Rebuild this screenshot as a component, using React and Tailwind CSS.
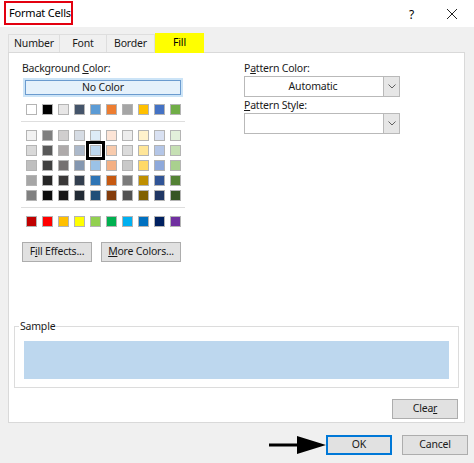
import React from "react";

const theme = [
  ["#FFFFFF", "#000000", "#E7E6E6", "#44546A", "#5B9BD5", "#ED7D31", "#A5A5A5", "#FFC000", "#4472C4", "#70AD47"],
];
const tints = [
  ["#F2F2F2", "#7F7F7F", "#D0CECE", "#D6DCE4", "#DDEBF7", "#FCE4D6", "#EDEDED", "#FFF2CC", "#D9E1F2", "#E2EFDA"],
  ["#D9D9D9", "#595959", "#AEAAAA", "#ACB9CA", "#BDD7EE", "#F8CBAD", "#DBDBDB", "#FFE699", "#B4C6E7", "#C6E0B4"],
  ["#BFBFBF", "#404040", "#757171", "#8497B0", "#9BC2E6", "#F4B084", "#C9C9C9", "#FFD966", "#8EA9DB", "#A9D08E"],
  ["#A6A6A6", "#262626", "#3A3838", "#333F4F", "#2F75B5", "#C65911", "#7B7B7B", "#BF8F00", "#305496", "#548235"],
  ["#808080", "#0D0D0D", "#171616", "#222B35", "#1F4E78", "#833C0C", "#525252", "#806000", "#203764", "#375623"],
];
const standard = ["#C00000", "#FF0000", "#FFC000", "#FFFF00", "#92D050", "#00B050", "#00B0F0", "#0070C0", "#002060", "#7030A0"];

function Swatch({ color, selected }) {
  return (
    <div className="relative w-[11px] h-[11px]">
      <div className="w-full h-full border border-[#b4b4b4]" style={{ backgroundColor: color }} />
      {selected && <div className="absolute -inset-[4px] border-[3px] border-black" />}
    </div>
  );
}

function Row({ colors, sel = -1 }) {
  return (
    <div className="flex gap-x-[5px]">
      {colors.map((c, i) => (
        <Swatch key={i} color={c} selected={i === sel} />
      ))}
    </div>
  );
}

function Btn({ children, w, primary }) {
  return (
    <div
      className={`h-[20px] flex items-center justify-center whitespace-nowrap bg-[#e1e1e1] ${primary ? "border-2 border-[#0078d7]" : "border border-[#adadad]"}`}
      style={{ width: w }}
    >
      {children}
    </div>
  );
}

function Dropdown({ value }) {
  return (
    <div className="w-[156px] h-[21px] border border-[#b9b9b9] bg-white flex">
      <div className="flex-1 flex items-center justify-center pr-[2px]">{value}</div>
      <div className="w-[16px] h-full bg-[#e6e6e6] border-l border-[#b9b9b9] flex items-center justify-center">
        <svg width="8" height="5" viewBox="0 0 8 5">
          <path d="M0.5 0.5 L4 4 L7.5 0.5" fill="none" stroke="#606060" strokeWidth="1" />
        </svg>
      </div>
    </div>
  );
}

export default function App() {
  return (
    <div
      className="w-[474px] h-[463px] bg-[#f0f0f0] overflow-hidden text-[10.5px] tracking-[-0.2px] text-[#1a1a1a] relative"
      style={{ fontFamily: '"Noto Sans", "Liberation Sans", sans-serif' }}
    >
      {/* title bar */}
      <div className="h-[27px] bg-white flex items-start">
        <div className="ml-[4px] mt-[1px] h-[24px] w-[69px] border-2 border-[#e3000f] flex items-center pl-[3px] text-[11px] text-black whitespace-nowrap">
          Format Cells
        </div>
        <div className="flex-1" />
        <div className="mt-[6px] mr-[32px] text-[12px] text-black">?</div>
        <div className="mt-[4px] mr-[16px] text-black">
          <svg width="12" height="20" viewBox="0 0 12 20">
            <path d="M1 5 L11 15 M11 5 L1 15" stroke="#222" strokeWidth="1" />
          </svg>
        </div>
      </div>

      {/* tabs */}
      <div className="h-[25px] pt-[7px] pl-[8px] flex relative z-10">
        <div className="w-[51px] h-[18px] flex items-center justify-center border-t border-l border-[#dedede]">Number</div>
        <div className="w-[47px] h-[18px] flex items-center justify-center border-t border-l border-[#dedede]">Font</div>
        <div className="w-[49px] h-[18px] flex items-center justify-center border-t border-l border-r border-[#dedede]">Border</div>
        <div className="w-[49px] h-[20px] -mt-[1px] bg-[#ffff00] flex items-center justify-center text-black">Fill</div>
      </div>

      {/* panel */}
      <div className="ml-[8px] w-[457px] h-[371px] bg-white border border-[#d9d9d9] flex flex-col">
        <div className="flex pl-[13px] pt-[7px] h-[265px]">
          {/* left */}
          <div className="w-[222px] flex flex-col">
            <div className="h-[16px] leading-[16px]">
              Background <span className="underline">C</span>olor:
            </div>
            <div className="mt-[2px] ml-[1px] w-[160px] h-[19px] bg-[#cce4f7] p-[2px]">
              <div className="w-full h-full bg-[#e5f1fb] border border-[#6b9bcf] flex items-center justify-center">No Color</div>
            </div>
            <div className="mt-[7px] ml-[4px]">
              <Row colors={theme[0]} />
            </div>
            <div className="mt-[6px] w-[164px] h-[1px] bg-[#dedede] -ml-[1px]" />
            <div className="mt-[8px] ml-[4px] flex flex-col gap-y-[4px]">
              {tints.map((r, i) => (
                <Row key={i} colors={r} sel={i === 1 ? 4 : -1} />
              ))}
            </div>
            <div className="mt-[6px] w-[164px] h-[1px] bg-[#dedede] -ml-[1px]" />
            <div className="mt-[8px] ml-[4px]">
              <Row colors={standard} />
            </div>
            <div className="mt-[15px] flex gap-x-[9px]">
              <Btn w={70}>
                F<span className="underline">i</span>ll Effects...
              </Btn>
              <Btn w={80}>
                <span className="underline">M</span>ore Colors...
              </Btn>
            </div>
          </div>
          {/* right */}
          <div className="flex flex-col">
            <div className="h-[16px] leading-[16px]">
              P<span className="underline">a</span>ttern Color:
            </div>
            <div>
              <Dropdown value="Automatic" />
            </div>
            <div className="h-[16px] leading-[16px]">
              <span className="underline">P</span>attern Style:
            </div>
            <div>
              <Dropdown value="" />
            </div>
          </div>
        </div>

        {/* sample */}
        <div className="mx-[5px] mt-[8px] h-[62px] border border-[#dcdcdc] relative">
          <div className="absolute -top-[9px] left-[4px] bg-white px-[1px] leading-[16px]">Sample</div>
          <div className="mt-[14px] mx-[9px] h-[38px] bg-[#BDD7EE]" />
        </div>

        <div className="flex justify-end mt-[11px] mr-[6px]">
          <Btn w={66}>
            Clea<span className="underline">r</span>
          </Btn>
        </div>
      </div>

      {/* bottom */}
      <div className="flex items-center mt-[12px] pl-[268px]">
        <svg width="58" height="20" viewBox="0 0 58 20">
          <path d="M1 8.5 H31 V11.5 H1 Z" fill="#000" />
          <path d="M29 1 L58 10 L29 19 Z" fill="#000" />
        </svg>
        <Btn w={66} primary>OK</Btn>
        <div className="w-[10px]" />
        <Btn w={66}>Cancel</Btn>
      </div>
    </div>
  );
}
